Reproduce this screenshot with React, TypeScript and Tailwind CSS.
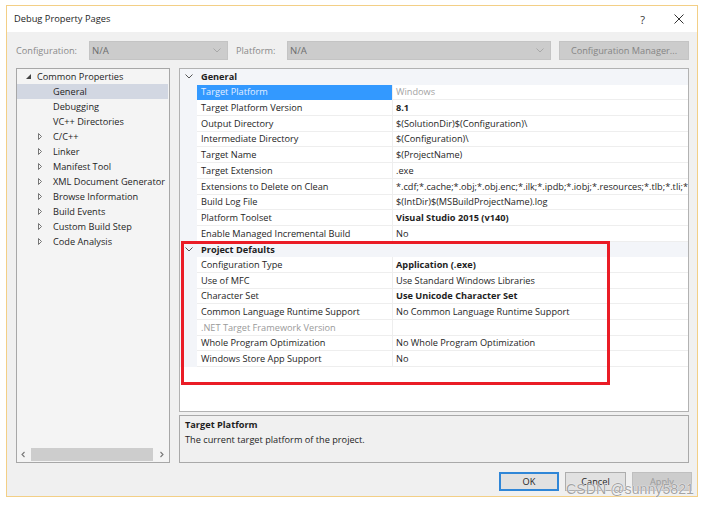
import React from "react";

type Prop = {
  name: string;
  value: string;
  bold?: boolean;
  dim?: boolean;
  selected?: boolean;
};

type Category = { title: string; rows: Prop[] };

const GRID: Category[] = [
  {
    title: "General",
    rows: [
      { name: "Target Platform", value: "Windows", selected: true },
      { name: "Target Platform Version", value: "8.1", bold: true },
      { name: "Output Directory", value: "$(SolutionDir)$(Configuration)\\" },
      { name: "Intermediate Directory", value: "$(Configuration)\\" },
      { name: "Target Name", value: "$(ProjectName)" },
      { name: "Target Extension", value: ".exe" },
      {
        name: "Extensions to Delete on Clean",
        value:
          "*.cdf;*.cache;*.obj;*.obj.enc;*.ilk;*.ipdb;*.iobj;*.resources;*.tlb;*.tli;*.tlh;*.tmp;*.rsp;*.pgc;*.pgd;*.meta;*.tlog;*.manifest;*.res;*.pch",
      },
      { name: "Build Log File", value: "$(IntDir)$(MSBuildProjectName).log" },
      { name: "Platform Toolset", value: "Visual Studio 2015 (v140)", bold: true },
      { name: "Enable Managed Incremental Build", value: "No" },
    ],
  },
  {
    title: "Project Defaults",
    rows: [
      { name: "Configuration Type", value: "Application (.exe)", bold: true },
      { name: "Use of MFC", value: "Use Standard Windows Libraries" },
      { name: "Character Set", value: "Use Unicode Character Set", bold: true },
      { name: "Common Language Runtime Support", value: "No Common Language Runtime Support" },
      { name: ".NET Target Framework Version", value: "", dim: true },
      { name: "Whole Program Optimization", value: "No Whole Program Optimization" },
      { name: "Windows Store App Support", value: "No" },
    ],
  },
];

const TREE = ["Debugging", "VC++ Directories"];

const TREE_FOLDERS = [
  "C/C++",
  "Linker",
  "Manifest Tool",
  "XML Document Generator",
  "Browse Information",
  "Build Events",
  "Custom Build Step",
  "Code Analysis",
];

function Chevron({ color = "#555" }: { color?: string }) {
  return (
    <svg width="8" height="5" viewBox="0 0 8 5" fill="none" stroke={color} strokeWidth="1">
      <path d="M0.5 0.5L4 4L7.5 0.5" />
    </svg>
  );
}

function Dropdown({ width }: { width: string }) {
  return (
    <div className={`${width} h-full bg-[#cccccc] border border-[#c4c4c4] flex items-center pl-[2px] pr-[6px] text-[#6d6d6d] text-[9.6px]`}>
      <span className="flex-1">N/A</span>
      <Chevron color="#a8a8a8" />
    </div>
  );
}

export default function App() {
  return (
    <div className="relative w-[711px] h-[505px] overflow-hidden bg-white pt-[5px] pl-[6px] font-['Open_Sans',sans-serif] text-[9.2px] text-[#1e1e1e] leading-none">
      <div className="w-[692px] h-[492px] border border-[#f3cf86] bg-[#f0f0f0] flex flex-col">
        {/* title bar */}
        <div className="h-[26px] bg-white flex items-center pl-[7px] pr-[13px]">
          <span className="flex-1 text-[9.3px]">Debug Property Pages</span>
          <span className="text-[11px] text-[#333] mr-[29px]">?</span>
          <svg width="10" height="10" viewBox="0 0 10 10" stroke="#333" strokeWidth="1">
            <path d="M0.5 0.5L9.5 9.5M9.5 0.5L0.5 9.5" />
          </svg>
        </div>

        {/* configuration row */}
        <div className="mt-[9px] h-[19px] flex items-stretch pl-[9px] pr-[8px]">
          <span className="w-[73px] flex items-center text-[#8a8a8a]">Configuration:</span>
          <Dropdown width="w-[139px]" />
          <span className="ml-[8px] w-[51px] flex items-center text-[#8a8a8a]">Platform:</span>
          <Dropdown width="w-[264px]" />
          <div className="ml-auto w-[130px] bg-[#cccccc] border border-[#c4c4c4] flex items-center justify-center text-[#858585]">
            Configuration Manager...
          </div>
        </div>

        {/* main area */}
        <div className="mt-[8px] h-[395px] flex pl-[9px] pr-[8px]">
          {/* tree */}
          <div className="w-[154px] shrink-0 h-full border border-[#a7a7a7] bg-[#f4f4f4] flex flex-col">
            <div className="h-[15px] flex items-center">
              <svg width="5" height="5" viewBox="0 0 5 5" className="ml-[9px] mr-[6px]">
                <path d="M5 0L5 5L0 5Z" fill="#444" />
              </svg>
              <span>Common Properties</span>
            </div>
            <div className="h-[15px] flex items-center bg-[#d2d7e2] mr-[1px]">
              <span className="ml-[36px]">General</span>
            </div>
            {TREE.map((t) => (
              <div key={t} className="h-[15px] flex items-center">
                <span className="ml-[36px]">{t}</span>
              </div>
            ))}
            {TREE_FOLDERS.map((t) => (
              <div key={t} className="h-[15px] flex items-center">
                <svg width="4" height="7" viewBox="0 0 4 7" className="ml-[21px] mr-[11px]" fill="none" stroke="#666" strokeWidth="0.9">
                  <path d="M0.5 0.5L3.5 3.5L0.5 6.5Z" />
                </svg>
                <span>{t}</span>
              </div>
            ))}
            <div className="mt-auto mb-[1px] h-[13px] flex items-center">
              <svg width="12" height="13" viewBox="0 0 12 13" fill="none" stroke="#777" strokeWidth="1.1">
                <path d="M7.5 4L5 6.5L7.5 9" />
              </svg>
              <div className="ml-[2px] w-[122px] h-full bg-[#cdcdcd]" />
              <svg width="14" height="13" viewBox="0 0 14 13" fill="none" stroke="#777" strokeWidth="1.1" className="ml-auto">
                <path d="M5.5 4L8 6.5L5.5 9" />
              </svg>
            </div>
          </div>

          {/* right column */}
          <div className="ml-[9px] flex-1 min-w-0 flex flex-col">
            <div className="relative h-[344px] border border-[#b2b2b2] bg-white overflow-hidden">
              {GRID.map((cat) => (
                <div key={cat.title}>
                  <div className="h-[15.7px] flex items-center bg-[#f3f5f9]">
                    <div className="w-[17px] flex justify-center">
                      <Chevron color="#555" />
                    </div>
                    <span className="ml-[4px] font-bold">{cat.title}</span>
                  </div>
                  {cat.rows.map((r) => (
                    <div key={r.name} className="h-[15.7px] flex">
                      <div className="w-[17px] shrink-0 bg-[#f3f5f9]" />
                      <div
                        className={`w-[195px] shrink-0 flex items-center pl-[4px] border-b ${
                          r.selected
                            ? "bg-[#3399ff] text-[#e4eeff] border-[#3399ff]"
                            : "border-[#eeeeee]"
                        } ${r.dim ? "text-[#9a9a9a]" : ""}`}
                      >
                        {r.name}
                      </div>
                      <div
                        className={`flex-1 min-w-0 flex items-center pl-[3px] border-l border-b border-[#eeeeee] whitespace-nowrap overflow-hidden ${
                          r.bold ? "font-bold" : ""
                        } ${r.selected ? "text-[#a3a3a3]" : ""}`}
                      >
                        {r.value}
                      </div>
                    </div>
                  ))}
                </div>
              ))}
              {/* red highlight box */}
              <div className="absolute left-[1px] top-[172px] w-[429px] h-[144px] border-[3px] border-[#ea1c26]" />
            </div>
            <div className="mt-[3px] flex-1 border border-[#a9a9a9] bg-[#f0f0f0] pl-[5px] pt-[1px]">
              <div className="font-bold h-[15px] flex items-center">Target Platform</div>
              <div className="h-[15px] flex items-center">The current target platform of the project.</div>
            </div>
          </div>
        </div>

        {/* buttons */}
        <div className="mt-[9px] h-[19px] flex justify-end gap-[6px] pr-[5px]">
          <div className="w-[60px] h-full bg-[#e1e1e1] border-2 border-[#2f86d7] flex items-center justify-center">
            OK
          </div>
          <div className="w-[61px] h-full bg-[#e1e1e1] border border-[#adadad] flex items-center justify-center">
            Cancel
          </div>
          <div className="w-[60px] h-full bg-[#cccccc] border border-[#bfbfbf] flex items-center justify-center text-[#9a9a9a]">
            Apply
          </div>
        </div>
      </div>

      {/* watermark */}
      <div className="absolute left-[566px] top-[482px] font-['Liberation_Sans',sans-serif] text-[14.2px] text-[#a4a4a4] [text-shadow:0_0_1px_#ffffff,0_0_1px_#ffffff]">
        CSDN @sunny5821
      </div>
    </div>
  );
}
